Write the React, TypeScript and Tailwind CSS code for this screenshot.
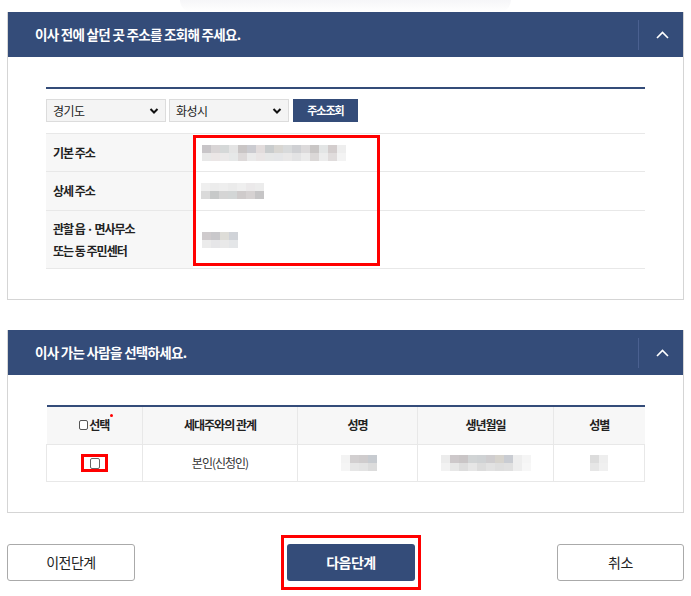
const font = { fontFamily: '"Noto Sans CJK KR", "Noto Sans", sans-serif' };

function Mosaic({ rows, cell = 9 }: { rows: string[][]; cell?: number }) {
  return (
    <div className="flex flex-col">
      {rows.map((r, i) => (
        <div key={i} className="flex">
          {r.map((c, j) => (
            <div key={j} style={{ background: c, width: cell, height: 8 }} />
          ))}
        </div>
      ))}
    </div>
  );
}

function PanelHeader({ title }: { title: string }) {
  return (
    <div className="flex h-[45px] items-center bg-[#344c79]">
      <h2 className="flex-1 pl-[27px] text-[13.5px] font-bold tracking-[-0.7px] text-white">
        {title}
      </h2>
      <div className="flex h-[30px] w-[45px] items-center justify-center border-l border-[#4a6090]">
        <svg width="13" height="8" viewBox="0 0 13 8" className="ml-[2px]">
          <polyline points="1,7 6.5,1.5 12,7" fill="none" stroke="#fff" strokeWidth="1.6" />
        </svg>
      </div>
    </div>
  );
}

function SelectBox({ label }: { label: string }) {
  return (
    <div className="flex h-[23px] w-[120px] items-center justify-between border border-[#dcdcdc] bg-[#f4f4f4] pl-[6px] pr-[6px]">
      <span className="text-[12px] tracking-[-0.5px] text-[#222]">{label}</span>
      <svg width="10" height="8" viewBox="0 0 10 8">
        <polyline points="1.5,2 5,5.5 8.5,2" fill="none" stroke="#111" strokeWidth="2" />
      </svg>
    </div>
  );
}

const addrTop = ["#c8c5c8", "#d9d5d6", "#d5d8d8", "#e4e4e4", "#c9c5c5", "#cbcbd0", "#e2dcdc", "#c9cccd", "#d8d6d2", "#d8dadb", "#cfd0d3", "#dcdadb", "#c9c6c5", "#e3e5e5", "#d3cdcd", "#eeeeee"];
const addrBot = ["#e8e8e8", "#ebe6e6", "#ebe9e9", "#e6e8e8", "#ddd9d9", "#eaeaea", "#e9e5e5", "#e6e7e7", "#e5e6e8", "#e9e8e8", "#e3e3e4", "#ebebeb", "#dbd8d7", "#ececec", "#e0dcdc", "#f3f3f3"];

export default function App() {
  return (
    <div className="min-h-[596px] bg-white text-[#222]" style={font}>
      <div className="mx-[180px] h-[12px] rounded-b-[60px] bg-gradient-to-b from-[#f6f6f8] to-white" />

      {/* 이사 전 주소 */}
      <section className="mx-[7px] border border-[#d5d5d5] border-t-0">
        <PanelHeader title="이사 전에 살던 곳 주소를 조회해 주세요." />
        <div className="px-[38px] pt-[30px] pb-[30px]">
          <div className="h-[2px] bg-[#344c79]" />
          <div className="mt-[10px] flex items-center gap-[3px]">
            <SelectBox label="경기도" />
            <SelectBox label="화성시" />
            <button className="ml-[1px] h-[23px] w-[65px] bg-[#344c79] text-[11px] font-bold tracking-[-1px] text-white">
              주소조회
            </button>
          </div>

          <div className="relative mt-[11px] border-t border-[#e8e8e8]">
            <div className="flex h-[38px] border-b border-[#e8e8e8]">
              <div className="flex w-[147px] items-center bg-[#f7f7f7] pl-[7px] text-[12px] font-bold tracking-[-1px]">
                기본 주소
              </div>
              <div className="flex items-center pl-[9px]">
                <Mosaic rows={[addrTop, addrBot]} />
              </div>
            </div>
            <div className="flex h-[39px] border-b border-[#e8e8e8]">
              <div className="flex w-[147px] items-center bg-[#f7f7f7] pl-[7px] text-[12px] font-bold tracking-[-1px]">
                상세 주소
              </div>
              <div className="flex items-center pl-[8px]">
                <Mosaic
                  rows={[
                    ["#efefef", "#ececec", "#eeeeee", "#ebebeb", "#efefef", "#ebe9ea", "#ececec"],
                    ["#dadada", "#c7c9c9", "#d5d5d5", "#d3d6d6", "#cfcbcb", "#d6d2d2", "#c6c5c6"],
                  ]}
                />
              </div>
            </div>
            <div className="flex h-[58px] border-b border-[#e8e8e8]">
              <div className="flex w-[147px] flex-col justify-center bg-[#f7f7f7] pl-[7px] text-[12px] font-bold leading-[22px] tracking-[-1px]">
                <span>관할 읍 · 면사무소</span>
                <span>또는 동 주민센터</span>
              </div>
              <div className="flex items-center pl-[9px]">
                <Mosaic
                  rows={[
                    ["#cfcbcd", "#c9c8cb", "#deddd8", "#d0d3d8"],
                    ["#ebebeb", "#e6e6e8", "#e9e9e9", "#e4e6e8"],
                  ]}
                />
              </div>
            </div>
            <div className="pointer-events-none absolute left-[147px] top-[1px] h-[131px] w-[187px] border-[3px] border-[#ff0000]" />
          </div>
        </div>
      </section>

      {/* 이사 가는 사람 */}
      <section className="mx-[7px] mt-[30px] border border-[#d5d5d5] border-t-0">
        <PanelHeader title="이사 가는 사람을 선택하세요." />
        <div className="px-[38px] pt-[30px] pb-[30px]">
          <table className="w-full table-fixed border-collapse border-t-2 border-t-[#344c79] text-[12px] tracking-[-1px]">
            <colgroup>
              <col className="w-[96px]" />
              <col className="w-[155px]" />
              <col className="w-[120px]" />
              <col className="w-[136px]" />
              <col />
            </colgroup>
            <thead>
              <tr className="h-[38px] bg-[#f7f7f7] font-bold">
                <th className="border-b border-r border-[#e8e8e8] font-bold">
                  <span className="relative inline-flex items-center gap-[1px]">
                    <span className="inline-block h-[10px] w-[9px] rounded-[2px] border border-[#555] bg-white" />
                    선택
                    <span className="absolute -right-[4px] -top-[2px] h-[3px] w-[3px] rounded-full bg-[#ff0000]" />
                  </span>
                </th>
                <th className="border-b border-r border-[#e8e8e8] font-bold">세대주와의 관계</th>
                <th className="border-b border-r border-[#e8e8e8] font-bold">성명</th>
                <th className="border-b border-r border-[#e8e8e8] font-bold">생년월일</th>
                <th className="border-b border-[#e8e8e8] font-bold">성별</th>
              </tr>
            </thead>
            <tbody>
              <tr className="h-[37px]">
                <td className="border-b border-l border-r border-[#e8e8e8] text-center">
                  <span className="inline-flex h-[18px] w-[27px] items-center justify-center border-[3px] border-[#ff0000] align-middle">
                    <span className="h-[11px] w-[10px] rounded-[2px] border border-[#666] bg-white" />
                  </span>
                </td>
                <td className="border-b border-r border-[#e8e8e8] text-center text-[#333]">본인(신청인)</td>
                <td className="border-b border-r border-[#e8e8e8]">
                  <div className="flex justify-center pl-[2px]">
                    <Mosaic
                      rows={[
                        ["#f3f3f3", "#d2cfd0", "#cfcccd", "#c7cbd0"],
                        ["#f5f5f5", "#e6e6e6", "#e3e3e3", "#dcdcdc"],
                      ]}
                    />
                  </div>
                </td>
                <td className="border-b border-r border-[#e8e8e8]">
                  <div className="flex justify-center">
                    <Mosaic
                      rows={[
                        ["#ececec", "#cdc8ca", "#c9c5c6", "#d1d4d5", "#cfd2d4", "#cfcdcf", "#d6d3cd", "#c9ccd2", "#eeeeee", "#f5f5f5"],
                        ["#f2f2f2", "#e7e7e7", "#dddddd", "#e6e6e6", "#dcdcdc", "#e2e2e2", "#dedede", "#e0e0e0", "#eeeeee", "#f7f7f7"],
                      ]}
                    />
                  </div>
                </td>
                <td className="border-b border-r border-[#e8e8e8]">
                  <div className="flex justify-center">
                    <Mosaic
                      rows={[
                        ["#dcdcdc", "#eeeeee"],
                        ["#e6e6e6", "#f0f0f0"],
                      ]}
                    />
                  </div>
                </td>
              </tr>
            </tbody>
          </table>
        </div>
      </section>

      {/* 버튼 */}
      <div className="mx-[7px] mt-[22px] flex items-center">
        <button className="h-[37px] w-[128px] rounded-[3px] border border-[#aaa] bg-white text-[14px] tracking-[-0.5px] text-[#222]">
          이전단계
        </button>
        <div className="ml-[146px] border-[3px] border-[#ff0000] px-[3px] py-[6px]">
          <button className="h-[37px] w-[128px] rounded-[3px] bg-[#344c79] text-[14px] font-bold tracking-[-0.5px] text-white">
            다음단계
          </button>
        </div>
        <button className="ml-auto h-[37px] w-[127px] rounded-[3px] border border-[#aaa] bg-white text-[14px] tracking-[-0.5px] text-[#222]">
          취소
        </button>
      </div>
    </div>
  );
}
